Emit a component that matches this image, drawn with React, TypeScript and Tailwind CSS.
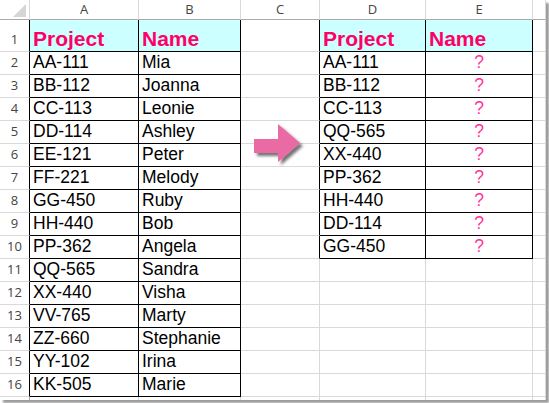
import React from 'react'

const left: [string, string][] = [
  ['AA-111', 'Mia'],
  ['BB-112', 'Joanna'],
  ['CC-113', 'Leonie'],
  ['DD-114', 'Ashley'],
  ['EE-121', 'Peter'],
  ['FF-221', 'Melody'],
  ['GG-450', 'Ruby'],
  ['HH-440', 'Bob'],
  ['PP-362', 'Angela'],
  ['QQ-565', 'Sandra'],
  ['XX-440', 'Visha'],
  ['VV-765', 'Marty'],
  ['ZZ-660', 'Stephanie'],
  ['YY-102', 'Irina'],
  ['KK-505', 'Marie'],
]

const right = ['AA-111', 'BB-112', 'CC-113', 'QQ-565', 'XX-440', 'PP-362', 'HH-440', 'DD-114', 'GG-450']

const cols = ['A', 'B', 'C', 'D', 'E', '']

// 1 = A ... 6 = F
function inTable(r: number, c: number) {
  if ((c === 1 || c === 2) && r >= 1 && r <= 16) return true
  if ((c === 4 || c === 5) && r >= 1 && r <= 10) return true
  return false
}

function cellValue(r: number, c: number): string {
  if (r === 1) {
    if (c === 1 || c === 4) return 'Project'
    if (c === 2 || c === 5) return 'Name'
    return ''
  }
  if (r >= 2 && r <= 16) {
    if (c === 1) return left[r - 2][0]
    if (c === 2) return left[r - 2][1]
  }
  if (r >= 2 && r <= 10) {
    if (c === 4) return right[r - 2]
    if (c === 5) return '?'
  }
  return ''
}

function Cell({ r, c }: { r: number; c: number }) {
  const val = cellValue(r, c)
  const rightBlack = inTable(r, c) || inTable(r, c + 1)
  const bottomBlack = inTable(r, c) || inTable(r + 1, c)
  const header = r === 1 && inTable(r, c)
  return (
    <div
      className={
        'flex items-end overflow-hidden whitespace-nowrap border-r border-b ' +
        (rightBlack ? 'border-r-black ' : 'border-r-[#d9d9d9] ') +
        (bottomBlack ? 'border-b-black ' : 'border-b-[#d9d9d9] ') +
        (header ? 'bg-[#ccffff] ' : 'bg-white ') +
        (val === '?' ? 'justify-center ' : 'pl-[3px] ')
      }
    >
      {header ? (
        <span className="pb-[1px] text-[21px] font-bold leading-[23px] text-[#ff0066]">{val}</span>
      ) : val === '?' ? (
        <span className="pb-[2px] text-[17.5px] leading-[19px] text-[#ff3399]">?</span>
      ) : (
        <span className="pb-[2px] text-[17.5px] leading-[19px] text-black">{val}</span>
      )}
    </div>
  )
}

export default function App() {
  const rows = Array.from({ length: 16 }, (_, i) => i + 1)
  return (
    <div className="h-[403px] w-[549px] bg-white font-['Liberation_Sans',Arial,sans-serif]">
      <div className="relative h-[400px] w-[546px] overflow-hidden bg-white shadow-[3px_3px_2px_#9c9c9c]">
        <div className="grid grid-cols-[30px_109px_102px_79px_106px_107px_1fr] grid-rows-[20px_32px_repeat(15,23px)_23px]">
          {/* column headers */}
          <div className="relative border-r border-b border-r-[#d9d9d9] border-b-[#ababab] bg-white">
            <svg className="absolute left-[13px] top-[4px]" width="13" height="13" viewBox="0 0 13 13">
              <polygon points="13,0 13,13 0,13" fill="#d6d6d6" />
            </svg>
          </div>
          {cols.map((l, i) => (
            <div
              key={i}
              className="flex items-center justify-center border-r border-b border-r-[#d9d9d9] border-b-[#ababab] bg-white pt-[1px] font-['Open_Sans','Noto_Sans',sans-serif] text-[13px] text-[#444]"
            >
              {l}
            </div>
          ))}

          {rows.map((r) => (
            <React.Fragment key={r}>
              <div
                className={
                  "flex items-end justify-center border-r border-b border-b-[#d9d9d9] bg-white pb-[2px] font-['Open_Sans','Noto_Sans',sans-serif] text-[13px] text-[#444] " +
                  (inTable(r, 1) ? 'border-r-black' : 'border-r-[#ababab]')
                }
              >
                {r}
              </div>
              {[1, 2, 3, 4, 5, 6].map((c) => (
                <Cell key={c} r={r} c={c} />
              ))}
            </React.Fragment>
          ))}

          {/* partial row 17 */}
          <div className="border-r border-r-[#ababab] bg-white" />
          {[1, 2, 3, 4, 5, 6].map((c) => (
            <div key={c} className="border-r border-r-[#d9d9d9] bg-white" />
          ))}
        </div>

        {/* arrow */}
        <svg className="absolute left-[250px] top-[120px]" width="60" height="50" viewBox="0 0 60 50">
          <defs>
            <filter id="sh" x="-20%" y="-20%" width="150%" height="150%">
              <feGaussianBlur in="SourceAlpha" stdDeviation="1.6" />
              <feOffset dx="3" dy="3" result="b" />
              <feComponentTransfer>
                <feFuncA type="linear" slope="0.55" />
              </feComponentTransfer>
              <feMerge>
                <feMergeNode />
                <feMergeNode in="SourceGraphic" />
              </feMerge>
            </filter>
          </defs>
          <polygon
            points="4,19 28,19 28,4 50,23 28,42 28,33 4,33"
            fill="#ea6aa3"
            filter="url(#sh)"
          />
        </svg>
      </div>
    </div>
  )
}
